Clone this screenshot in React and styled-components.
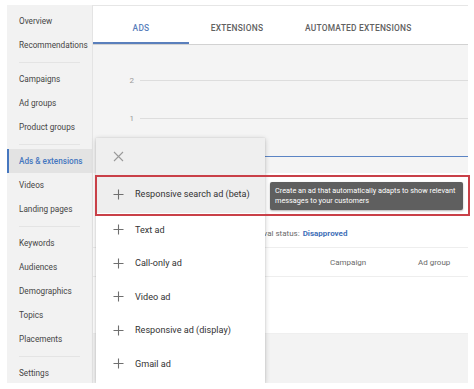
import styled, { createGlobalStyle } from "styled-components";

const Global = createGlobalStyle`
  html, body {
    margin: 0;
    background: #fff;
    font-family: Roboto, "Liberation Sans", Arial, sans-serif;
  }
`;

const navGroups = [
  ["Overview", "Recommendations"],
  ["Campaigns", "Ad groups", "Product groups"],
  ["Ads & extensions", "Videos", "Landing pages"],
  ["Keywords", "Audiences", "Demographics", "Topics", "Placements"],
  ["Settings"],
];

const tabs = ["ADS", "EXTENSIONS", "AUTOMATED EXTENSIONS"];

const menuItems = [
  "Responsive search ad (beta)",
  "Text ad",
  "Call-only ad",
  "Video ad",
  "Responsive ad (display)",
  "Gmail ad",
];

const Plus = () => (
  <svg width="11" height="11" viewBox="0 0 11 11">
    <path d="M5.5 0.5v10M0.5 5.5h10" stroke="#6f6f6f" strokeWidth="1.1" fill="none" />
  </svg>
);

const Close = () => (
  <svg width="11" height="11" viewBox="0 0 11 11">
    <path d="M1 1l9 9M10 1l-9 9" stroke="#9a9a9a" strokeWidth="1.1" fill="none" />
  </svg>
);

const App = () => {
  return (
    <Page>
      <Global />
      <Frame>
        <Sidebar>
          {navGroups.map((group, gi) => (
            <NavGroup key={gi} first={gi === 0}>
              {group.map((label) => (
                <NavItem key={label} active={label === "Ads & extensions"}>
                  {label}
                </NavItem>
              ))}
            </NavGroup>
          ))}
        </Sidebar>
        <Main>
          <Tabs>
            {tabs.map((t, i) => (
              <Tab key={t} active={i === 0}>
                {t}
              </Tab>
            ))}
          </Tabs>
          <Chart>
            <GridRow>
              <Axis>2</Axis>
              <GridLine />
            </GridRow>
            <GridRow>
              <Axis>1</Axis>
              <GridLine />
            </GridRow>
            <GridRow>
              <Axis />
              <GridLine blue />
            </GridRow>
          </Chart>
          <Toolbar />
          <Status>
            Approval status: <b>Disapproved</b>
          </Status>
          <TableHead>
            <HeadCell>Campaign</HeadCell>
            <HeadCell>Ad group</HeadCell>
          </TableHead>
          <EmptyRow />
          <TotalRow />
        </Main>
        <Menu>
          <MenuHeader>
            <Close />
          </MenuHeader>
          {menuItems.map((item, i) => (
            <MenuItem key={item} highlighted={i === 0}>
              <Plus />
              <span>{item}</span>
            </MenuItem>
          ))}
        </Menu>
      </Frame>
      <Highlight />
      <Tooltip>
        Create an ad that automatically adapts to show relevant
        <br />
        messages to your customers
      </Tooltip>
    </Page>
  );
};

const Page = styled.div`
  position: relative;
  width: 474px;
  height: 389px;
  padding: 5px 6px 6px 7px;
  box-sizing: border-box;
  overflow: hidden;
`;

const Frame = styled.div`
  position: relative;
  display: grid;
  grid-template-columns: 86px 1fr;
  height: 100%;
  overflow: hidden;
`;

const Sidebar = styled.nav`
  background: #f2f2f2;
  border-right: 1px solid #e4e4e4;
  padding-top: 4px;
`;

const NavGroup = styled.div`
  position: relative;
  padding-top: ${(p) => (p.first ? "0" : "10px")};
  &::before {
    content: "";
    display: ${(p) => (p.first ? "none" : "block")};
    position: absolute;
    top: 5px;
    left: 12px;
    right: 12px;
    height: 1px;
    background: #e4e4e4;
  }
`;

const NavItem = styled.div`
  height: 24px;
  display: flex;
  align-items: center;
  padding-left: 12px;
  font-size: 8.2px;
  color: ${(p) => (p.active ? "#4677bf" : "#454545")};
  font-weight: ${(p) => (p.active ? 500 : 400)};
  background: ${(p) => (p.active ? "#e3e3e3" : "transparent")};
  box-shadow: ${(p) => (p.active ? "inset 2px 0 0 #4677bf" : "none")};
  white-space: nowrap;
`;

const Main = styled.main`
  display: flex;
  flex-direction: column;
  min-width: 0;
  background: #fff;
`;

const Tabs = styled.div`
  display: flex;
  border-top: 1px solid #e6e6e6;
  border-bottom: 1px solid #d2d2d2;
  background: #fff;
`;

const Tab = styled.div`
  min-width: 96px;
  padding: 17px 20px 8px;
  box-sizing: border-box;
  text-align: center;
  font-size: 8.4px;
  font-weight: 500;
  letter-spacing: 0.25px;
  line-height: 11px;
  color: ${(p) => (p.active ? "#5a7fbc" : "#616161")};
  border-bottom: 2px solid ${(p) => (p.active ? "#5a7fbc" : "transparent")};
  white-space: nowrap;
`;

const Chart = styled.div`
  background: #f4f4f4;
  padding-top: 16px;
  height: 128px;
  box-sizing: border-box;
`;

const GridRow = styled.div`
  height: 38px;
  display: flex;
  align-items: center;
`;

const Axis = styled.span`
  width: 47px;
  padding-right: 6px;
  box-sizing: border-box;
  text-align: right;
  font-size: 8px;
  color: #9a9a9a;
`;

const GridLine = styled.div`
  flex: 1;
  height: 1px;
  background: ${(p) => (p.blue ? "#5b84c4" : "#dddddd")};
`;

const Toolbar = styled.div`
  height: 46px;
`;

const Status = styled.div`
  height: 28px;
  display: flex;
  align-items: center;
  gap: 3px;
  padding-left: 149px;
  font-size: 8px;
  color: #6a6a6a;
  white-space: nowrap;
  & b {
    color: #3f70b8;
    font-weight: 700;
  }
`;

const TableHead = styled.div`
  height: 28px;
  display: grid;
  grid-template-columns: 88px 1fr;
  align-items: center;
  padding-left: 237px;
  border-top: 1px solid #eeeeee;
  border-bottom: 1px solid #eeeeee;
`;

const HeadCell = styled.span`
  font-size: 8px;
  color: #6a6a6a;
  white-space: nowrap;
`;

const EmptyRow = styled.div`
  height: 56px;
`;

const TotalRow = styled.div`
  flex: 1;
  background: #f3f3f3;
  border-top: 1px solid #efefef;
`;

const Menu = styled.div`
  position: absolute;
  left: 89px;
  top: 133px;
  bottom: 0;
  width: 169px;
  background: #fff;
  box-shadow: 0 1px 5px rgba(0, 0, 0, 0.22), 0 0 1px rgba(0, 0, 0, 0.15);
`;

const MenuHeader = styled.div`
  height: 37px;
  display: flex;
  align-items: center;
  padding-left: 17px;
  background: #efefef;
`;

const MenuItem = styled.div`
  height: ${(p) => (p.highlighted ? "38px" : "33.5px")};
  display: flex;
  align-items: center;
  gap: 11px;
  padding-left: 17px;
  background: ${(p) => (p.highlighted ? "#eeeeee" : "#fff")};
  font-size: 9.1px;
  color: #333;
  white-space: nowrap;
`;

const Highlight = styled.div`
  position: absolute;
  left: 95px;
  top: 175px;
  width: 375px;
  height: 41px;
  box-sizing: border-box;
  border: 2px solid #c94048;
  pointer-events: none;
`;

const Tooltip = styled.div`
  position: absolute;
  left: 270px;
  top: 182px;
  width: 193px;
  height: 28px;
  box-sizing: border-box;
  padding: 4px 5px;
  background: #5f5f5f;
  border-radius: 2px;
  box-shadow: 0 1px 2px rgba(0, 0, 0, 0.3);
  color: #fff;
  font-size: 7.3px;
  line-height: 10px;
  white-space: nowrap;
`;

export default App;
